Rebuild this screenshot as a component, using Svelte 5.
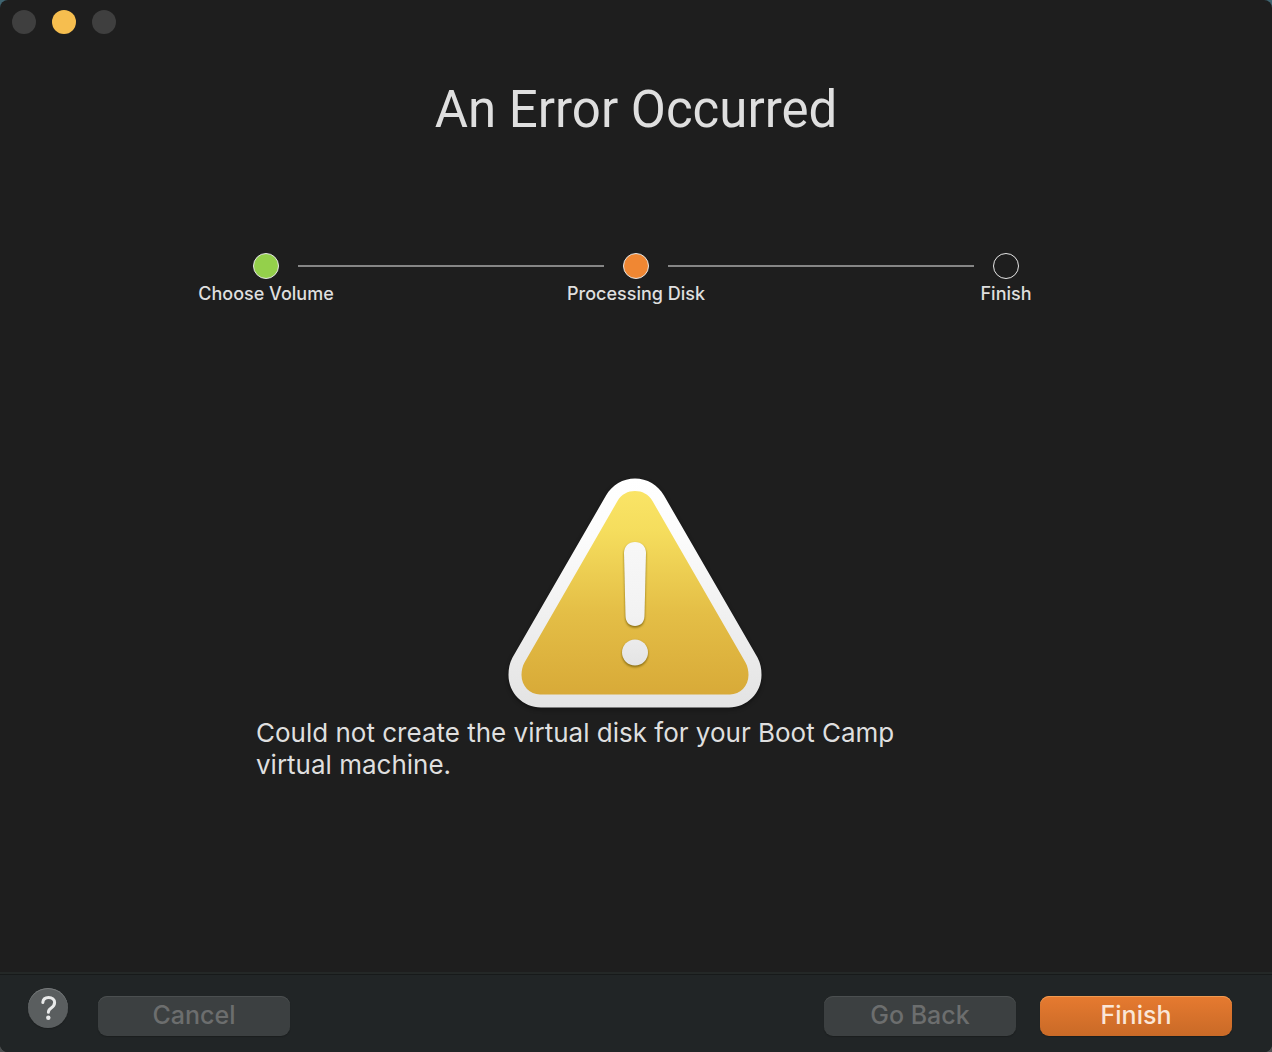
<script>
  const steps = [
    { label: 'Choose Volume', state: 'done' },
    { label: 'Processing Disk', state: 'current' },
    { label: 'Finish', state: 'pending' },
  ];
</script>

<div class="window">
  <div class="titlebar">
    <button class="light" aria-label="Close" disabled></button>
    <button class="light minimize" aria-label="Minimize"></button>
    <button class="light" aria-label="Zoom" disabled></button>
  </div>

  <main>
    <h1>An Error Occurred</h1>

    <ol class="steps">
      {#each steps as step, i}
        <li>
          <div class="track">
            <span class="line" class:hidden={i === 0}></span>
            <span class="dot {step.state}"></span>
            <span class="line" class:hidden={i === steps.length - 1}></span>
          </div>
          <span class="label">{step.label}</span>
        </li>
      {/each}
    </ol>

    <section class="message">
      <svg class="warning" width="270" height="244" viewBox="501 472 270 244" role="img" aria-label="Warning">
        <defs>
          <linearGradient id="rim" x1="0" y1="0" x2="0" y2="1">
            <stop offset="0" stop-color="#ffffff" />
            <stop offset=".25" stop-color="#fcfcfc" />
            <stop offset="1" stop-color="#e3e3e3" />
          </linearGradient>
          <linearGradient id="fill" x1="0" y1="0" x2="0" y2="1">
            <stop offset="0" stop-color="#fae466" />
            <stop offset=".2" stop-color="#f5dd5d" />
            <stop offset=".6" stop-color="#e4be46" />
            <stop offset="1" stop-color="#d8aa38" />
          </linearGradient>
          <linearGradient id="mark" gradientUnits="userSpaceOnUse" x1="0" y1="542" x2="0" y2="666">
            <stop offset="0" stop-color="#f8f8f8" />
            <stop offset=".6" stop-color="#f2f2f2" />
            <stop offset="1" stop-color="#e4e4e4" />
          </linearGradient>
          <filter id="shadow" x="-10%" y="-10%" width="120%" height="120%" color-interpolation-filters="sRGB">
            <feDropShadow dx="0" dy="2" stdDeviation="2" flood-color="#000" flood-opacity=".4" />
          </filter>
          <filter id="relief" x="-50%" y="-20%" width="200%" height="140%" color-interpolation-filters="sRGB">
            <feDropShadow dx="0" dy="1.5" stdDeviation="1" flood-color="#6b5500" flood-opacity=".8" />
          </filter>
        </defs>
        <path
          fill="url(#rim)"
          filter="url(#shadow)"
          d="M606 495.500C612 485 623 478.500 635 478.500S658 485 664 495.500L757.500 657.500C760.500 663 761.500 668.500 761.500 675C761.500 693 747 707.500 729 707.500H541C523 707.500 508.500 693 508.500 675C508.500 668.500 509.500 663 512.500 657.500Z"
        />
        <path
          fill="url(#fill)"
          d="M617.500 501C621.500 494 628 491 635 491S648.500 494 652.500 501L745.500 662.500C747.500 666 748.500 670.500 748.500 675C748.500 686 740 694.500 730 694.500H540C530 694.500 521.500 686 521.500 675C521.500 670.500 522.500 666 524.500 662.500Z"
        />
        <g fill="url(#mark)" filter="url(#relief)">
          <path d="M624 553C624 546.500 628.500 542 635 542S646 546.500 646 553L644.500 616C644.300 622.500 640.500 626 635 626S625.700 622.500 625.500 616Z" />
          <circle cx="635" cy="652.500" r="13" />
        </g>
      </svg>
      <p>Could not create the virtual disk for your Boot Camp virtual machine.</p>
    </section>
  </main>

  <footer>
    <button class="help" aria-label="Help">
      <svg width="40" height="40" viewBox="0 0 40 40" aria-hidden="true">
        <path d="M14.800 14.500C15.100 11.300 17.300 9.500 20.600 9.500C24.200 9.500 26.600 11.500 26.600 14.500C26.600 17 25.300 18.500 23.200 19.900C21.200 21.200 20.400 22.200 20.400 24.300" fill="none" stroke="#e9eaea" stroke-width="3" stroke-linecap="round" />
        <circle cx="20.300" cy="29.800" r="2.200" fill="#e9eaea" />
      </svg>
    </button>
    <button class="push" disabled>Cancel</button>
    <span class="spacer"></span>
    <button class="push" disabled>Go Back</button>
    <button class="push primary">Finish</button>
  </footer>
</div>

<style>
  :global(body) {
    margin: 0;
    background: linear-gradient(#3f6470, #4c4f50);
  }
  .window {
    display: flex;
    flex-direction: column;
    min-height: 100vh;
    box-sizing: border-box;
    overflow: hidden;
    border-radius: 8px;
    background: #1e1e1e;
    color: #dfdfdf;
    font-family: Inter, 'Liberation Sans', sans-serif;
  }
  button {
    padding: 0;
    border: 0;
    font-family: inherit;
  }
  .titlebar {
    display: flex;
    gap: 16px;
    padding: 10px 12px;
  }
  .light {
    width: 24px;
    height: 24px;
    border-radius: 50%;
    background: #3f3f3f;
  }
  .minimize {
    background: #f6be4f;
  }
  main {
    flex: 1;
    display: flex;
    flex-direction: column;
  }
  h1 {
    margin: 34px 0 0;
    font-family: Roboto, 'Liberation Sans', sans-serif;
    font-size: 51px;
    line-height: 64px;
    font-weight: 400;
    text-align: center;
  }
  .steps {
    display: grid;
    grid-template-columns: repeat(3, 1fr);
    margin: 111px 0 0;
    padding: 0 81px;
    list-style: none;
  }
  .track {
    display: flex;
    align-items: center;
    gap: 19px;
  }
  .line {
    flex: 1;
    height: 2px;
    background: #868686;
  }
  .hidden {
    visibility: hidden;
  }
  .dot {
    box-sizing: border-box;
    width: 26px;
    height: 26px;
    border: 1px solid #e6e6e6;
    border-radius: 50%;
  }
  .done {
    background: #94d04b;
  }
  .current {
    background: #f08733;
  }
  .label {
    display: block;
    margin-top: 4px;
    font-size: 18px;
    line-height: 22px;
    font-weight: 500;
    text-align: center;
  }
  .message {
    box-sizing: border-box;
    width: 100%;
    margin-top: 167px;
    padding: 0 256px;
  }
  .warning {
    display: block;
    margin: 0 auto;
  }
  p {
    max-width: 680px;
    margin: 1px 0 0;
    font-size: 26px;
    line-height: 32px;
  }
  footer {
    display: flex;
    align-items: flex-start;
    gap: 24px;
    padding: 14px 40px 16px 28px;
    border-top: 2px solid #242827;
    background: #212526;
    box-shadow: inset 0 1px #171a1a;
  }
  .help {
    width: 40px;
    height: 40px;
    margin-right: 6px;
    border-radius: 50%;
    background: #5a5e5f;
    box-shadow: inset 0 1px #75797a, 0 1px 1px #15181880;
  }
  .help svg {
    display: block;
  }
  .spacer {
    flex: 1;
  }
  .push {
    width: 192px;
    height: 40px;
    margin-top: 8px;
    padding-bottom: 2px;
    border-radius: 9px;
    background: #3c4041;
    box-shadow: inset 0 1px #4b4f50, 0 1px 1px #15181880;
    color: #6c6e6e;
    font-size: 25px;
    line-height: 32px;
    font-weight: 500;
  }
  .primary {
    background: linear-gradient(#e67a30, #c96a27);
    box-shadow: inset 0 1px #f09a50, 0 1px 1px #15181880;
    color: #fae6d8;
  }
</style>
